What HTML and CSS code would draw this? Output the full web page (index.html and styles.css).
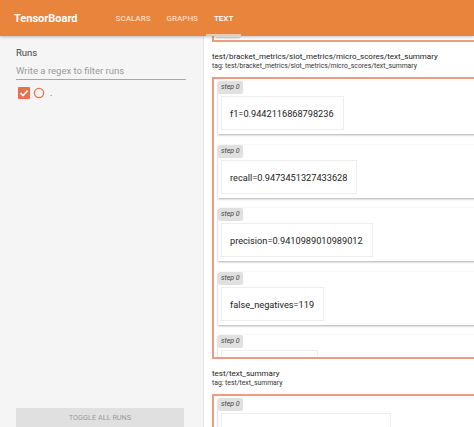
FILE: index.html
```html
<!DOCTYPE html>
<html lang="en">
	<head>
		<meta charset="UTF-8" />
		<meta name="viewport" content="width=device-width, initial-scale=1.0" />
		<title>TensorBoard</title>
		<link rel="stylesheet" href="styles.css">
	</head>
	<body>
		<header class="toolbar">
			<div class="brand">TensorBoard</div>
			<nav class="tabs">
				<a class="tab">Scalars</a>
				<a class="tab">Graphs</a>
				<a class="tab active">Text</a>
			</nav>
		</header>

		<div class="main">
			<aside class="sidebar">
				<div class="runs-title">Runs</div>
				<div class="regex">Write a regex to filter runs</div>
				<div class="run-row">
					<svg class="check" width="12" height="12" viewBox="0 0 12 12">
						<rect width="12" height="12" rx="1" fill="#e8704c" />
						<path d="M2.6 6.2 L5 8.5 L9.6 3.6" fill="none" stroke="#fff" stroke-width="1.6" />
					</svg>
					<svg class="dot" width="12" height="12" viewBox="0 0 12 12">
						<circle cx="6" cy="6" r="4.6" fill="none" stroke="#e8704c" stroke-width="1.3" />
					</svg>
					<span class="run-name">.</span>
				</div>
				<div class="spacer"></div>
				<div class="toggle">Toggle all runs</div>
			</aside>

			<section class="content">
				<div class="card partial"><div class="step-end"></div></div>

				<div class="summary-title">test/bracket_metrics/slot_metrics/micro_scores/text_summary</div>
				<div class="summary-tag">tag: test/bracket_metrics/slot_metrics/micro_scores/text_summary</div>
				<div class="card tall">
					<div class="step">
						<span class="badge">step 0</span>
						<div class="value">f1=0.9442116868798236</div>
					</div>
					<div class="step">
						<span class="badge">step 0</span>
						<div class="value">recall=0.9473451327433628</div>
					</div>
					<div class="step">
						<span class="badge">step 0</span>
						<div class="value">precision=0.9410989010989012</div>
					</div>
					<div class="step">
						<span class="badge">step 0</span>
						<div class="value">false_negatives=119</div>
					</div>
					<div class="step">
						<span class="badge">step 0</span>
						<div class="value short"></div>
					</div>
				</div>

				<div class="summary-title">test/text_summary</div>
				<div class="summary-tag">tag: test/text_summary</div>
				<div class="card">
					<div class="step">
						<span class="badge">step 0</span>
						<div class="value wide"></div>
					</div>
				</div>
			</section>
		</div>
	</body>
</html>
```

FILE: styles.css
```css
body {
	margin: 0;
	width: 474px;
	height: 427px;
	overflow: hidden;
	font-family: Roboto, 'Liberation Sans', sans-serif;
	color: #212121;
	background: #fff;
}

.toolbar {
	position: relative;
	z-index: 2;
	height: 36px;
	background: #e8843c;
	display: flex;
	align-items: center;
	padding-left: 14px;
	box-shadow: 0 1px 3px rgba(0, 0, 0, 0.25);
}
.brand {
	color: #fff;
	font-size: 11px;
	font-weight: 700;
}
.tabs {
	display: flex;
	height: 100%;
	margin-left: 30px;
}
.tab {
	display: flex;
	align-items: center;
	padding: 2px 8px 0;
	font-size: 8px;
	font-weight: 500;
	text-transform: uppercase;
	color: rgba(255, 255, 255, 0.72);
	border-bottom: 2px solid transparent;
	box-sizing: border-box;
}
.tab.active {
	color: #fff;
	border-bottom-color: rgba(255, 255, 255, 0.55);
}

.main {
	display: flex;
	height: 391px;
}

.sidebar {
	width: 204px;
	flex: none;
	background: #f5f5f5;
	border-right: 1px solid #e6e6e6;
	display: flex;
	flex-direction: column;
	padding: 11px 0 0 16px;
	box-sizing: border-box;
}
.runs-title {
	font-size: 9.5px;
	color: #444;
	line-height: 11px;
}
.regex {
	width: 170px;
	margin-top: 7px;
	font-size: 9.5px;
	color: #9a9a9a;
	line-height: 12px;
	padding-bottom: 2px;
	border-bottom: 1px solid #a8a8a8;
}
.run-row {
	display: flex;
	align-items: center;
	gap: 3px;
	margin-top: 7px;
	padding-left: 2px;
}
.run-name {
	font-size: 9px;
	color: #555;
	margin-left: 2px;
}
.spacer {
	flex: 1;
}
.toggle {
	width: 168px;
	height: 22px;
	margin-bottom: -3px;
	padding-bottom: 3px;
	box-sizing: border-box;
	background: #e0e0e0;
	color: #9a9a9a;
	font-size: 7.3px;
	text-transform: uppercase;
	display: flex;
	align-items: center;
	justify-content: center;
}

.content {
	width: 330px;
	flex: none;
	padding-left: 8px;
	overflow: hidden;
}

.card {
	border: 2px solid #eb9c82;
	padding: 2px 0 0 4px;
	background: #fff;
}
.card.partial {
	border-top: none;
	height: 4px;
	padding: 0 0 0 2px;
}
.step-end {
	width: 24px;
	height: 1px;
	background: #fff;
	box-shadow: 0 1px 2px rgba(0, 0, 0, 0.3);
}
.card.tall {
	height: 276px;
	overflow: hidden;
}

.summary-title {
	margin-top: 9px;
	font-size: 8px;
	line-height: 11px;
	color: #222;
	white-space: nowrap;
}
.summary-tag {
	font-size: 6.8px;
	line-height: 8px;
	color: #333;
	white-space: nowrap;
	margin-bottom: 7px;
}

.step {
	display: flex;
	flex-direction: column;
	align-items: flex-start;
	background: #fff;
	box-shadow: 0 1px 2px rgba(0, 0, 0, 0.32);
	padding-bottom: 4px;
	margin-bottom: 10.5px;
}
.badge {
	height: 13px;
	line-height: 13px;
	padding: 0 3px;
	background: #e0e0e0;
	border-radius: 2px;
	font-size: 7px;
	font-style: italic;
	color: #444;
}
.value {
	margin: 2px 0 0 3px;
	height: 34px;
	line-height: 34px;
	padding: 0 9px 0 8px;
	border: 1px solid #eee;
	box-sizing: border-box;
	font-size: 9.2px;
	color: #222;
}
.value.short {
	width: 97px;
}
.value.wide {
	width: 170px;
}
```
